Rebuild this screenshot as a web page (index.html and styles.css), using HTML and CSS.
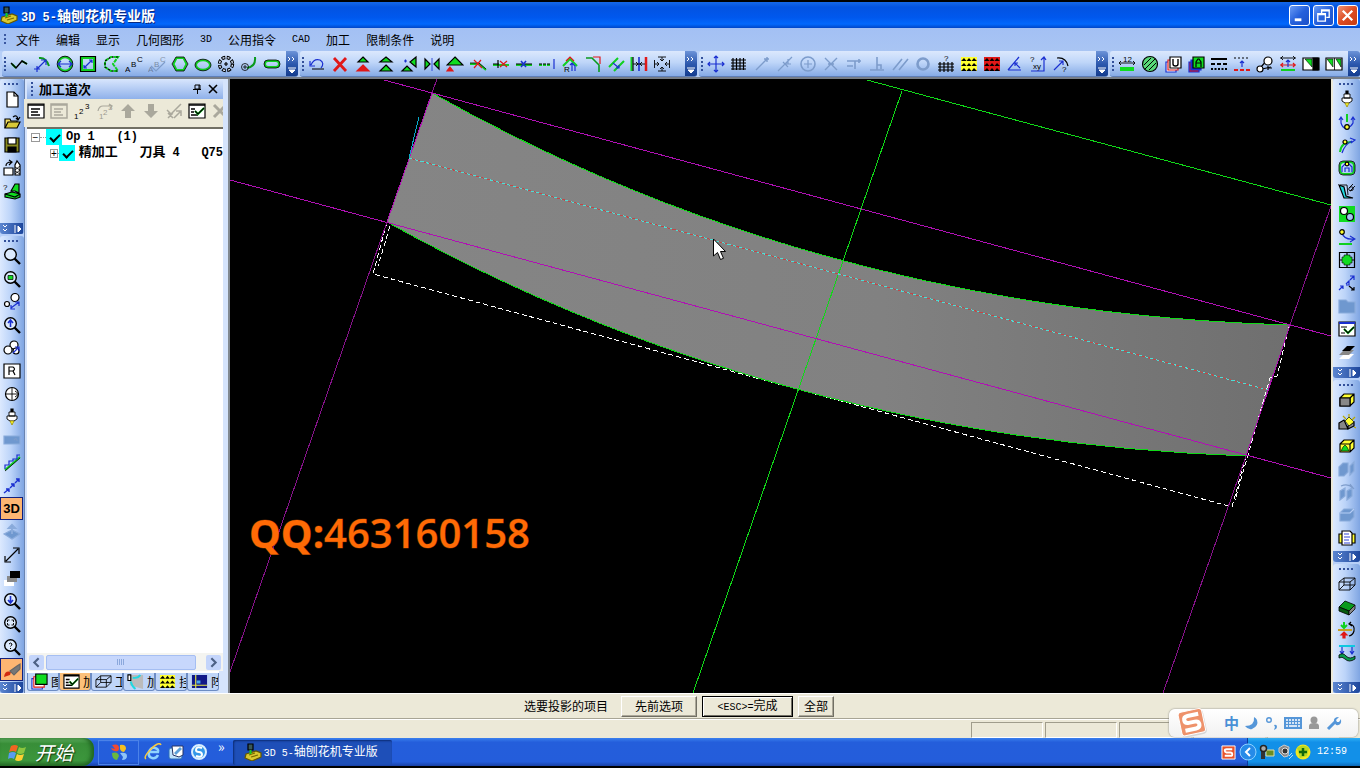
FILE: index.html
```html
<!DOCTYPE html>
<html lang="zh-CN">

<head>
    <meta charset="UTF-8" />
    <meta name="viewport" content="width=device-width, initial-scale=1.0">
    <title>3D 5-轴刨花机专业版</title>
    <link rel="stylesheet" href="styles.css">
</head>

<body>
    <header class="titlebar">
        <svg class="icon" data-icon="app"></svg>
        <h1><span>3D 5-</span>轴刨花机专业版</h1>
        <button class="win-btn" aria-label="最小化"><svg viewBox="0 0 20 20"><path d="M5 13h7v3H5z" fill="#fff" /></svg></button>
        <button class="win-btn" aria-label="还原"><svg viewBox="0 0 20 20"><path d="M8 8V4h8v8h-3M4 8h8v8H4zM8 5h8M4 9h8" fill="none" stroke="#fff" stroke-width="1.4" /></svg></button>
        <button class="win-btn close" aria-label="关闭"><svg viewBox="0 0 20 20"><path d="M5 5l10 10M15 5L5 15" stroke="#fff" stroke-width="2.4" /></svg></button>
    </header>

    <nav class="menubar">
        <button>文件</button>
        <button>编辑</button>
        <button>显示</button>
        <button>几何图形</button>
        <button class="latin">3D</button>
        <button>公用指令</button>
        <button class="latin">CAD</button>
        <button>加工</button>
        <button>限制条件</button>
        <button>说明</button>
    </nav>

    <div class="toolbars">
        <div class="toolbar w1" data-tools="check arcline diameter diagonal crescent abc abcOff hexagon ellipse dots hook slot"></div>
        <div class="toolbar w2" data-tools="undo delete mirrorRed mirrorUp mirrorDiag mirrorSide mirrorBig trimEnd trimMid join extend roof corner offset gap compress"></div>
        <div class="toolbar w3" data-tools="move grid lineOff tangentOff centerOff crossOff tarrowOff perpOff parallelOff circleOff gridQuery hatchYellow hatchRed angle queryXY queryArc"></div>
        <div class="toolbar w4" data-tools="dimension hatchCircle layersU layersA lineStyle dashStyle nodes measure triDark triLight"></div>
    </div>

    <main class="workspace">
        <div class="side left">
            <div class="vbar" data-tools="file open save export help3d"></div>
            <div class="vbar grow" data-tools="zoom zoomGreen nodesArrow zoomUp circles boxR axis plug rectOff stairs steps view3d pinOff expand layers zoomDown zoomWindow zoomHelp brush"></div>
        </div>

        <aside class="panel">
            <div class="panel-head">
                <h2>加工道次</h2>
                <button aria-label="固定"><svg viewBox="0 0 12 12"><path d="M4 2h5v4H4zM2 6.5h8M6.5 7v4M8 2v4" fill="none" stroke="#000" /></svg></button>
                <button aria-label="关闭"><svg viewBox="0 0 12 12"><path d="M2 2l8 8M10 2l-8 8" stroke="#000" stroke-width="1.6" /></svg></button>
            </div>
            <div class="panel-tools" data-tools="list listOff numbers numbersOff upOff downOff checksOff listCheck removeOff"></div>
            <ul class="tree">
                <li><span class="expander">−</span><span class="dotline"></span><label><input type="checkbox" checked>Op 1 &nbsp; (1)</label></li>
                <li class="child"><span class="expander">+</span><span class="dotline"></span><label><input type="checkbox" checked><span class="cjk">精加工</span> &nbsp; <span class="cjk">刀具</span> 4 &nbsp; Q75</label></li>
            </ul>
            <div class="scrollbar">
                <button aria-label="向左"><svg viewBox="0 0 14 14"><path d="M9 3L5 7l4 4" /></svg></button>
                <span class="thumb"></span>
                <button aria-label="向右"><svg viewBox="0 0 14 14"><path d="M5 3l4 4-4 4" /></svg></button>
            </div>
            <div class="tabs">
                <button><svg class="icon" data-icon="tabLayers"></svg><span>图层</span></button>
                <button class="active"><svg class="icon" data-icon="listCheck"></svg><span>加工</span></button>
                <button><svg class="icon" data-icon="wirebox"></svg><span>工件</span></button>
                <button><svg class="icon" data-icon="tabTool"></svg><span>加工</span></button>
                <button><svg class="icon" data-icon="hatchYellow"></svg><span>挂起</span></button>
                <button><svg class="icon" data-icon="tabNest"></svg><span>阵列</span></button>
            </div>
        </aside>

        <svg class="viewport" viewBox="230 79 1101 614" preserveAspectRatio="xMidYMid slice">
            <defs>
                <linearGradient id="surface">
                    <stop offset="0" stop-color="#858585" />
                    <stop offset=".55" stop-color="#818181" />
                    <stop offset=".75" stop-color="#797979" />
                    <stop offset="1" stop-color="#6f6f6f" />
                </linearGradient>
            </defs>
            <g class="lines">
                <path fill="url(#surface)" d="M432 93Q819 311 1290 325L1246 456Q777 439 387 222z" />
                <path class="dashed" d="M387 222L373 274L1232 507L1246 456M390 226L378 266M1289 327L1277 376L1270 378L1235 500" />
                <path class="edge" d="M867 80L1331 205M902 91L693 693M432 93Q819 311 1290 325M387 222Q777 439 1246 456" />
                <path class="frame" d="M384 80L1331 336M230 180L1331 478M432 93L387 222M1290 325L1246 456" />
                <path class="frame dim" d="M437 79L432 93M387 222L230 672M1331 206L1290 325M1246 456L1163 693" />
                <path class="path-red" d="M409 158L1268 390" />
                <path class="path-cyan" d="M409 158L1268 390" />
                <path d="M419 117L409 158" stroke="#08a8c8" />
            </g>
            <text class="mark" x="249" y="548"><tspan>QQ:</tspan>463160158</text>
            <path d="M713.500 239v17l4-3.500 3 7 3-1.200-3-6.800h5z" fill="#fff" stroke="#000" />
        </svg>

        <div class="side right">
            <div class="vbar long" data-tools="plug uArrow curveTool pocket sheet greenNodes curveLine target axes folderOff checklist sheets"></div>
            <div class="vbar mid" data-tools="box sun greenBox boxesOff foldOff cubeOff doc"></div>
            <div class="vbar grow" data-tools="wirebox brick flipAxis surface"></div>
        </div>
    </main>

    <div class="prompt">
        <span>选要投影的项目</span>
        <button class="w-prev">先前选项</button>
        <button class="w-esc default"><span class="latin">&lt;ESC&gt;=</span>完成</button>
        <button class="w-all">全部</button>
    </div>

    <div class="status">
        <span></span><span></span><span></span><span></span><span></span>
        <div class="ime">
            <svg class="ime-logo" viewBox="0 0 30 30"><g transform="rotate(-12 15 15)"><rect x="2" y="3" width="25" height="25" rx="4" fill="#d5d5d5" /><rect x="2" y="2" width="24" height="24" rx="3" fill="#ee926b" stroke="#fff" /><path d="M22 7H11q-4 0-4 3.500T11 14h6q4 0 4 3.500T17 21H6" fill="none" stroke="#fff" stroke-width="4" /></g></svg>
            <b>中</b>
            <svg viewBox="0 0 16 16"><path d="M10 2q1 9-9 9 3 4 7 3 7-3 5-9-1-2-3-3z" fill="#5596d8" /></svg>
            <svg viewBox="0 0 16 16"><circle cx="5" cy="5" r="2.300" fill="none" stroke="#5596d8" stroke-width="1.400" /><path d="M10 10q3-1 3 2 0 2-3 3l1-3z" fill="#5596d8" /></svg>
            <svg class="wide" viewBox="0 0 18 16"><path d="M0 2h18v12H0z" fill="#5596d8" /><path d="M2 5h14M2 8h14" stroke="#fff" stroke-width="1.600" stroke-dasharray="2 1" /><path d="M2 11h2m1 0h8m1 0h2" stroke="#fff" stroke-width="1.600" /></svg>
            <svg viewBox="0 0 16 16"><circle cx="8" cy="5" r="3.500" fill="#999" /><path d="M3 14V11q0-3 5-3t5 3v3z" fill="#999" /></svg>
            <svg viewBox="0 0 16 16"><path d="M2 14L9 7" stroke="#5596d8" stroke-width="3" /><path d="M8 7q-1-5 5-5l-3 3 1 2 2 0 2-3q1 7-5 6z" fill="#5596d8" /></svg>
        </div>
    </div>

    <footer class="taskbar">
        <button class="start">
            <svg viewBox="0 0 20 20"><path d="M3 4q4-2 7 0L8 10q-3-2-7 0z" fill="#f26522" /><path d="M11 5q3 2 7 0l-2 6q-4 2-7 0z" fill="#8cc63f" /><path d="M1 11q4-2 7 0l-2 6q-3-2-6 0z" fill="#5a9cf0" /><path d="M9 12q3 2 7 0l-2 6q-4 2-7 0z" fill="#fdd032" /></svg>
            开始
        </button>
        <button class="pinned" aria-label="小工具"><svg viewBox="0 0 18 18"><path d="M2 2q7-2 7 3 0 4-4 3-3 0-4-3l4 1z" fill="#f04a30" /><path d="M10 2q6-1 6 4l-2 3q-5 0-4-7z" fill="#f5c020" /><path d="M2 10q6-2 7 3l-2 4q-5 0-5-7z" fill="#6ab840" /><path d="M10 10q7-1 7 3 0 4-5 4l1-3z" fill="#8fc4f8" /></svg></button>
        <div class="quick">
            <a href="#" aria-label="Internet Explorer"><svg viewBox="0 0 18 18"><path d="M14 12q-2 4-6 3-4-1-3-6 2-5 6-4 4 1 3 4H5" fill="none" stroke="#8fd4ff" stroke-width="2.500" /><path d="M2 16Q-1 14 7 6t10-4" fill="none" stroke="#f5c842" stroke-width="1.500" /></svg></a>
            <a href="#" aria-label="桌面"><svg viewBox="0 0 18 18"><rect x="2" y="5" width="13" height="11" rx="2" fill="#bfe2fa" stroke="#2b6fb8" /><path d="M5 3h11v9l-4 2-6-2z" fill="#fff" stroke="#236" /><path d="M7 10l6-6 2 2-6 6z" fill="#5ca0d8" /></svg></a>
            <a href="#" aria-label="搜狗浏览器"><svg viewBox="0 0 18 18"><circle cx="9" cy="9" r="7" fill="#3598e8" stroke="#d9efff" stroke-width="2" /><path d="M12 5Q6 3 6 7q0 2 3 2t3 3q-1 3-6 1" fill="none" stroke="#fff" stroke-width="2" /></svg></a>
        </div>
        <span class="more">»</span>
        <button class="task"><svg class="icon" data-icon="app"></svg><span><span class="latin">3D 5-</span>轴刨花机专业版</span></button>
        <svg class="sogou" viewBox="0 0 16 16"><path d="M1 1h14v14H1z" fill="#e8532b" stroke="#fff" /><path d="M12 4.500H6Q4 4.500 4 6t2 2h4q2 0 2 2t-2 1.500H4" fill="none" stroke="#fff" stroke-width="2" /></svg>
        <div class="tray">
            <button class="collapse" aria-label="隐藏图标"><svg viewBox="0 0 18 18"><circle cx="9" cy="9" r="8" fill="#268be8" stroke="#8ed2ff" /><path d="M11 5L7 9l4 4" fill="none" stroke="#fff" stroke-width="2" /></svg></button>
            <svg viewBox="0 0 16 16"><path d="M7 6h8v6H7z" fill="#6b8e23" stroke="#dda" /><path d="M4 6v9" stroke="#333" stroke-width="4" /><circle cx="4.500" cy="4.500" r="3" fill="#aaa" stroke="#222" stroke-width="1.500" /></svg>
            <svg viewBox="0 0 16 16"><path d="M2 4l5-3 5 2-1 9-4 1-5-5z" fill="#888" stroke="#ccc" /><circle cx="8" cy="7" r="3" fill="#333" stroke="#ddd" /><path d="M12 12l3-3M12 15l4-4" stroke="#adf" /></svg>
            <svg viewBox="0 0 16 16"><circle cx="8" cy="8" r="7.500" fill="#f4e820" /><path d="M2 4q6-5 12 0l-2 8-7 2z" fill="#7bc828" opacity=".5" /><path d="M8 4v8M4 8h8" stroke="#12670c" stroke-width="2.500" /></svg>
            <time class="latin">12:59</time>
        </div>
    </footer>

    <script src="icons.js"></script>
</body>

</html>
```
FILE: styles.css
```css
* {
    box-sizing: border-box;
}

body {
    display: flex;
    flex-direction: column;
    height: 100vh;
    margin: 0;
    overflow: hidden;
    border-top: 2px solid #000;
    background: #ece9d8;
    color: #000;
    font: 12px/16px "Noto Sans CJK SC", sans-serif;
}

button {
    margin: 0;
    padding: 0;
    border: 0;
    background: none;
    color: inherit;
    font: inherit;
}

h1, h2, ul {
    margin: 0;
    padding: 0;
    font-size: 12px;
}

svg {
    flex: none;
}

.latin {
    font-family: "Liberation Mono", monospace;
    font-size: 10px;
}

/* icon strokes and fills */
.icon {
    width: 18px;
    height: 18px;
    fill: none;
    stroke: #000;
    stroke-width: 1.2;
}

.icon text {
    font: 8px "Liberation Sans", sans-serif;
    fill: #000;
    stroke: none;
}

.icon .g { stroke: #0a9a1c; }
.icon .lg { stroke: #10d020; stroke-width: 2; }
.icon .b { stroke: #1a2fd0; }
.icon .r { stroke: #e01818; }
.icon .o { stroke: #7d9ccb; }
.icon .s { stroke: #aaa89c; }
.icon .fg { fill: #10dc20; }
.icon .fr { fill: #e01818; }
.icon .fb { fill: #1a2fd0; }
.icon .fk { fill: #000; }
.icon .fw { fill: #fff; }
.icon .fy { fill: #ffff30; }
.icon .fh { fill: #888; }
.icon .fo { fill: #6f98cf; stroke: #8aabdb; }
.icon .fs { fill: #aaa89c; stroke: none; }
.icon .fc { fill: #20d8e0; }
.icon .lens { fill: #dceafd; stroke-width: 1.4; }

.titlebar {
    display: flex;
    flex: none;
    align-items: center;
    gap: 2px;
    height: 26px;
    padding-right: 2px;
    background: linear-gradient(#1568e8, #0353e1 20%, #0058ee 60%, #0268fc 85%, #0046c8);
    color: #fff;
}

.titlebar h1 {
    flex: 1;
    margin-left: 1px;
    font-size: 14px;
    line-height: 20px;
    text-shadow: 1px 1px #0a2a80;
}

.titlebar h1 span {
    font: bold 12px "Liberation Mono", monospace;
}

.win-btn {
    width: 21px;
    height: 21px;
    margin-left: 1px;
    border: 1px solid #fff;
    border-radius: 3px;
    background: linear-gradient(135deg, #6b9cf5, #2560dc 50%, #1c50c8);
}

.win-btn svg {
    display: block;
    width: 19px;
    height: 19px;
}

.win-btn.close {
    background: linear-gradient(135deg, #ee9577, #dd4b22 50%, #c43c14);
}

.menubar {
    display: flex;
    flex: none;
    align-items: center;
    gap: 16px;
    height: 23px;
    padding-left: 4px;
    background: linear-gradient(#a3c0f4, #a9c5f3);
}

.menubar::before {
    width: 2px;
    height: 12px;
    margin-right: -6px;
    background: repeating-linear-gradient(#3a57a0 0 2px, transparent 2px 4px);
    content: "";
}

.menubar .latin {
    font-size: 10px;
}

.toolbars {
    display: flex;
    flex: none;
    gap: 2px;
    height: 26px;
    padding-left: 2px;
    background: #b6cff8;
}

.toolbar {
    display: flex;
    align-items: center;
    border-bottom: 1px solid #5f7fb8;
    border-radius: 3px;
    background: linear-gradient(#dbe8fd, #bfd6f9 45%, #86abe6);
    overflow: hidden;
}

.toolbar::before {
    width: 2px;
    height: 14px;
    margin: 0 1px 0 2px;
    background: repeating-linear-gradient(#33509a 0 2px, transparent 2px 4px);
    content: "";
}

.w1 { flex: 296 1 0; }
.w2 { flex: 397 1 0; }
.w3 { flex: 409 1 0; }
.w4 { flex: 250 1 0; }

.tool {
    display: flex;
    flex: none;
    align-items: center;
    justify-content: center;
    width: 23px;
    height: 23px;
}

.more-tools {
    display: flex;
    flex: none;
    align-items: center;
    justify-content: center;
    width: 12px;
    height: 26px;
    margin-left: auto;
    background: linear-gradient(#6c93d8, #2c58ad 50%, #123a8c);
}

.more-tools svg {
    width: 10px;
    height: 20px;
    fill: none;
    stroke: #fff;
}

.workspace {
    display: flex;
    flex: 1;
    min-height: 0;
    border-top: 2px solid #777e88;
    background: #000;
}

.side {
    display: flex;
    flex: none;
    flex-direction: column;
    gap: 2px;
    width: 25px;
    border-right: 1px solid #6b84b0;
    background: #b8d0f8;
}

.side.right {
    width: 29px;
    border-right: 0;
    border-left: 2px solid #ece9d8;
}

.vbar {
    display: flex;
    flex: none;
    flex-direction: column;
    align-items: center;
    height: 155px;
    border-radius: 3px;
    background: linear-gradient(90deg, #dce9fe, #bcd4f9 45%, #7fa5e2);
    overflow: hidden;
}

.vbar.long { height: 299px; }
.vbar.mid { height: 182px; }
.vbar.grow { flex: 1; }

.vbar::before {
    flex: none;
    width: 15px;
    height: 2px;
    margin: 4px 0 2px;
    background: repeating-linear-gradient(90deg, #33509a 0 2px, transparent 2px 4px);
    content: "";
}

.left .vbar {
    padding-right: 1px;
}

.vbar .more-tools {
    width: 100%;
    height: 11px;
    margin: auto 0 0;
    background: linear-gradient(90deg, #5c86d0, #1d469c);
}

.vbar .more-tools svg {
    width: 24px;
    height: 10px;
}

.tool.pressed {
    border: 1px solid #14207c;
    background: #fdb672;
}

.tool .label {
    font: bold 13px "Liberation Sans", sans-serif;
}

.panel {
    display: flex;
    flex: none;
    flex-direction: column;
    width: 205px;
    padding: 0 5px 0 2px;
    border-right: 2px solid #808890;
    background: #d5e4fc;
}

.panel-head {
    display: flex;
    flex: none;
    align-items: center;
    gap: 4px;
    height: 20px;
    padding: 0 4px;
    background: linear-gradient(#d8e6fd, #8fb1ea);
}

.panel-head::before {
    width: 2px;
    height: 14px;
    margin-right: 2px;
    background: repeating-linear-gradient(#33509a 0 2px, transparent 2px 4px);
    content: "";
}

.panel-head h2 {
    flex: 1;
    font-size: 13px;
}

.panel-head svg {
    display: block;
    width: 12px;
    height: 12px;
}

.panel-tools {
    display: flex;
    flex: none;
    height: 28px;
    margin-left: -3px;
    background: #ece9d8;
    overflow: hidden;
}

.tree {
    flex: 1;
    border-top: 2px solid #716f64;
    background: #fff;
    list-style: none;
    font: bold 12px/16px "Liberation Mono", "Noto Sans CJK SC", monospace;
    overflow: hidden;
}

.tree li {
    display: flex;
    align-items: center;
    height: 16px;
    padding-left: 4px;
    white-space: nowrap;
}

.tree .child {
    padding-left: 23px;
}

.tree label {
    display: flex;
    align-items: center;
    white-space: pre;
}

.tree .cjk {
    font-size: 13px;
}

.expander {
    width: 9px;
    height: 9px;
    border: 1px solid #999;
    font: 10px/7px "Liberation Sans", sans-serif;
    text-align: center;
}

.dotline {
    width: 6px;
    border-top: 1px dotted #999;
}

.tree input {
    width: 16px;
    height: 16px;
    margin: 0 4px 0 0;
    background: #00ffff;
    appearance: none;
}

.tree input:checked::after {
    display: block;
    width: 8px;
    height: 4px;
    margin: 5px 4px;
    border-bottom: 2px solid #000;
    border-left: 2px solid #000;
    transform: rotate(-45deg);
    content: "";
}

.scrollbar {
    display: flex;
    flex: none;
    align-items: center;
    gap: 2px;
    height: 18px;
    padding: 1px 2px;
    background: #f4f4f0;
}

.scrollbar button {
    width: 15px;
    height: 15px;
    border-radius: 2px;
    background: #c4d5fb;
}

.scrollbar svg {
    display: block;
    width: 15px;
    height: 15px;
    fill: none;
    stroke: #4d6185;
    stroke-width: 2;
}

.thumb {
    flex: 1;
    height: 15px;
    margin-right: 8px;
    border: 1px solid #a5bef2;
    border-radius: 2px;
    background: repeating-linear-gradient(90deg, #8ba8dc 0 1px, transparent 1px 2px) center / 8px 6px no-repeat, #c7d7fc;
}

.tabs {
    display: flex;
    flex: none;
    height: 22px;
    padding-bottom: 2px;
    border-top: 2px solid #fff;
    margin-right: 4px;
}

.tabs button {
    display: flex;
    flex: 1;
    align-items: center;
    min-width: 0;
    padding-left: 3px;
    border: 1px solid #6c8cc4;
    border-top: 0;
    border-radius: 0 0 3px 3px;
    background: #bfd5f8;
    overflow: hidden;
}

.tabs .icon {
    width: 17px;
    height: 17px;
}

.tabs .active {
    background: #fcc07a;
}

.tabs span {
    width: 7px;
    height: 16px;
    margin-left: 3px;
    overflow: hidden;
    white-space: nowrap;
}

.viewport {
    flex: 1;
    min-width: 0;
    width: 0;
    height: 100%;
    background: #000;
    fill: none;
}

.lines { shape-rendering: crispEdges; }
.edge { stroke: #10d818; }
.frame { stroke: #b010b4; }
.frame.dim { stroke: #86128a; }

.dashed {
    stroke: #fff;
    stroke-dasharray: 5 3;
}

.path-red {
    stroke: #c04848;
}

.path-cyan {
    stroke: #50dcd4;
    stroke-dasharray: 3 3;
}

.mark {
    fill: #ff6a05;
    font: 600 40px "Open Sans", sans-serif;
    paint-order: stroke;
    stroke: #5a2400;
    stroke-width: 1px;
}

.mark tspan {
    font-weight: 700;
}

.prompt {
    display: flex;
    flex: none;
    align-items: center;
    justify-content: center;
    height: 26px;
    border-top: 1px solid #fff;
    border-bottom: 1px solid #a8a595;
}

.prompt button {
    height: 21px;
    border: 1px solid;
    border-color: #fff #716f64 #716f64 #fff;
    box-shadow: inset -1px -1px #aca899;
}

.prompt .w-prev { width: 76px; margin: 0 5px 0 13px; }
.prompt .w-esc { width: 91px; margin-right: 5px; }
.prompt .w-all { width: 36px; margin-right: 2px; }

.prompt .default {
    border: 1px solid #000;
    box-shadow: inset 1px 1px #fff, inset -1px -1px #716f64;
}

.status {
    position: relative;
    display: flex;
    flex: none;
    justify-content: flex-end;
    gap: 2px;
    height: 19px;
    padding: 2px 21px 0 0;
    border-top: 1px solid #fff;
}

.status > span {
    width: 72px;
    border: 1px solid;
    border-color: #a09d8c #fff #fff #a09d8c;
}

/* input method bar floats over the status line */
.ime {
    position: absolute;
    right: 2px;
    bottom: 1px;
    display: flex;
    align-items: center;
    gap: 4px;
    width: 189px;
    height: 28px;
    padding-left: 9px;
    border-radius: 6px;
    background: linear-gradient(#fff, #f1f1f1);
    box-shadow: 0 0 2px #777;
}

.ime svg {
    width: 16px;
    height: 16px;
}

.ime .wide {
    width: 18px;
}

.ime .ime-logo {
    width: 30px;
    height: 30px;
    margin-right: 12px;
}

.ime b {
    width: 16px;
    color: #4a90d6;
    font-size: 15px;
}

.taskbar {
    display: flex;
    flex: none;
    align-items: center;
    height: 30px;
    border-bottom: 2px solid #000;
    background: linear-gradient(#3a80ee, #245edb 15%, #245ddb 85%, #1941a5);
    color: #fff;
}

.start {
    display: flex;
    align-items: center;
    gap: 7px;
    width: 94px;
    height: 28px;
    padding-left: 8px;
    border-radius: 0 10px 12px 0;
    background: linear-gradient(#64b464, #388e38 20%, #3c963c 80%, #2a6e2a);
    box-shadow: inset -3px 0 4px #1f6420;
    font-size: 19px;
    font-style: italic;
    text-shadow: 1px 1px 1px #153a10;
    white-space: nowrap;
}

.start svg {
    width: 20px;
    height: 20px;
}

.pinned {
    width: 41px;
    height: 25px;
    margin-left: 4px;
    border: 1px solid #4b82e8;
}

.pinned svg,
.quick svg,
.collapse svg {
    display: block;
    width: 18px;
    height: 18px;
    margin: 0 auto;
}

.quick {
    display: flex;
    gap: 5px;
    margin-left: 5px;
}

.more {
    margin: -12px 0 0 10px;
    font-size: 14px;
}

.task {
    display: flex;
    align-items: center;
    gap: 2px;
    width: 159px;
    height: 25px;
    margin-left: 8px;
    padding-left: 11px;
    border-radius: 2px;
    background: #1e4fb8;
    box-shadow: inset 1px 1px 2px #0c2c74;
    white-space: nowrap;
}

.sogou {
    width: 15px;
    height: 15px;
    margin-left: auto;
}

.tray {
    display: flex;
    align-items: center;
    gap: 2px;
    width: 113px;
    height: 28px;
    margin-left: 11px;
    border-left: 1px solid #0c3a9c;
    background: linear-gradient(#2fb0f6, #1290e8 15%, #1290e8 85%, #0c68b8);
}

.tray svg {
    width: 16px;
    height: 16px;
}

.tray .collapse {
    margin-left: -9px;
}

.tray .collapse svg {
    width: 18px;
    height: 18px;
}

.tray time {
    margin-left: 4px;
}
```
FILE: icons.js
```js
var lens = '<path d="M11 11l6 6" stroke-width="2.4"/><circle cx="7.5" cy="7.5" r="5.8" class="lens"/>';
var zig = '<path d="M1 6l3-3 2.500 3L9 3l2.500 3L14 3l3 3zM1 11l3-3 2.500 3L9 8l2.500 3L14 8l3 3zM1 16l3-3 2.500 3L9 13l2.500 3 2.500-3 3 3z" class="fk" stroke="none"/>';
var cube = 'M2 7l4-4h10v8l-4 4H2zM2 7h10v8M12 7l4-4';
var gridLines = 'M3 3v12M6.500 3v12M10 3v12M13.500 3v12M1 5h15M1 8h15M1 11h15M1 14h15';

var icons = {
    app: '<path d="M2 11l10-3 5 2v4l-9 4-7-3z" fill="#d8c830" stroke="#655800"/><path d="M5 12l6-2M7 14l7-2" stroke="#776a00"/><path d="M4 1h5v6H4z" fill="#385858"/><path d="M6.500 7v4" class="lg"/>',

    // geometry
    check: '<path class="lg" d="M12 6l5 3M6 13l-4-4"/><path d="M1 8l5 5 6-7 5 3" stroke-width="1.500"/>',
    arcline: '<path class="g" d="M6 3q7-1 10 8" stroke-width="2"/><path class="b" d="M4 14l9-9M8 5h5v5M1 14h6M4 11v6"/>',
    diameter: '<circle class="lg" cx="9" cy="9" r="6.800"/><circle cx="9" cy="9" r="7.800" stroke-width=".9"/><path class="b" d="M2 9h14M5 6L2 9l3 3M13 6l3 3-3 3"/>',
    diagonal: '<path class="lg" d="M3 3h12v12H3z"/><path d="M1.500 1.500h15v15h-15z"/><path class="b" d="M5 13l8-8M10 5h3v3M5 10v3h3"/>',
    crescent: '<path class="lg" d="M16 2H9L3 6v6l6 4h7L11 9z" stroke-dasharray="4 1"/><path d="M16 2H9L3 6v6l6 4h7" stroke-dasharray="2 2"/>',
    abc: '<text x="0" y="17">A</text><text x="6" y="12">B</text><text x="12" y="7">C</text>',
    abcOff: '<g opacity=".35"><text x="0" y="17">A</text><text x="6" y="12">B</text><text x="12" y="7">C</text></g><path class="o" d="M3 11l5 5 9-9"/>',
    hexagon: '<path class="lg" d="M5.500 3h7l3 6-3 6h-7l-3-6z"/><path d="M5 2h8l4 7-4 7H5L1 9z" stroke-width=".8"/>',
    ellipse: '<ellipse class="lg" cx="9" cy="10" rx="7" ry="4.800"/><ellipse cx="9" cy="10" rx="8" ry="5.800" stroke-width=".8"/>',
    dots: '<circle cx="9" cy="9" r="6.500" stroke-width="3.400" stroke-dasharray="3.600 1.500"/><circle cx="9" cy="9" r="6.500" stroke="#dbe8fd" stroke-width="1.400" stroke-dasharray="2 3.100" stroke-dashoffset="-.8"/><path d="M9 7v4M7 9h4"/>',
    hook: '<path class="g" d="M15 2q1 10-8 11" stroke-width="2"/><circle cx="5" cy="12" r="3.500" stroke-width=".8"/><path d="M3 12h4M5 10v4" stroke-width=".8"/>',
    slot: '<rect class="lg" x="2" y="6" width="14" height="6" rx="3"/><rect x="1" y="5" width="16" height="8" rx="4" stroke-width=".8"/>',

    // editing
    undo: '<path class="b" d="M2 6v5h5M3 10Q6 3 12 5q5 3 1 8"/><path d="M4 14h12"/>',
    delete: '<path class="r" d="M3 3l12 13M15 3L3 16" stroke-width="2.800"/>',
    mirrorRed: '<path class="fg" d="M9 2l5 5H4z"/><path class="fr r" d="M9 10l6 6H3z"/>',
    mirrorUp: '<path class="fg" d="M9 2l6 5H3zM9 10l6 6H3z"/>',
    mirrorDiag: '<path class="fg" d="M10 7l6-5v10zM2 16l5-5 5 5z"/><path class="b" d="M4 6h3M5.500 4.500v3"/>',
    mirrorSide: '<path class="fg" d="M2 4l5 5-5 5zM16 4l-5 5 5 5z"/><path class="b" d="M9 3v13" stroke-width=".8"/>',
    mirrorBig: '<path class="fg" d="M9 2l8 8H1z"/><path class="fr r" d="M4 12l3 4H1z"/>',
    trimEnd: '<path class="lg" d="M1 9h9l7 6"/><path d="M1 8h9l7 6" stroke-width=".8"/><path class="r" d="M5 5l8 8M12 5l-7 8"/>',
    trimMid: '<path class="lg" d="M1 10h16"/><path d="M1 9h6M6 5v8"/><path class="r" d="M8 6l7 6M15 6l-7 6"/>',
    join: '<path class="lg" d="M1 10h16"/><path d="M1 9h16"/><path class="b" d="M6 6l5 6M11 6l-5 6" stroke-width="1.500"/>',
    extend: '<path class="lg" d="M1 10h12" stroke-dasharray="3 1"/><path d="M1 9h12" stroke-dasharray="3 1"/><path class="b" d="M16 4v10"/>',
    roof: '<path class="lg" d="M2 11l7-7 7 7"/><path class="r" d="M5 6l4-4 4 4"/><text x="3" y="17">R</text><path class="b" d="M11 16V8M9 10l2-2 3 3v5"/>',
    corner: '<path class="r" d="M9 2h7v7"/><path class="g" d="M2 3h6l7 7v7" stroke-width="1.600"/>',
    offset: '<path class="lg" d="M2 12L11 3M7 16l10-10"/><path class="b" d="M6 8l6 5M9 13h3v-3"/>',
    gap: '<path class="lg" d="M1.500 2v14"/><path d="M3 2v14"/><path class="r" d="M16 2v14" stroke-width="2.500"/><path class="b" d="M9 2v14" stroke-width="1.600"/><path d="M3 9h12M6 7l2 2-2 2M12 7l-2 2 2 2" stroke-width=".9"/>',
    compress: '<path d="M5 2h8M5 16h8M1.500 5v8M16.500 5v8M9 2v4M7 4l2 2 2-2M9 16v-4M7 14l2-2 2 2M2 9h4M12 9h4M4 7l2 2-2 2M14 7l-2 2 2 2" stroke-width=".9"/>',

    // snapping and queries
    move: '<path class="b" d="M9 1v16M1 9h16M7 3l2-2 2 2M7 15l2 2 2-2M3 7L1 9l2 2M15 7l2 2-2 2"/>',
    grid: '<path d="' + gridLines + '"/>',
    lineOff: '<path class="o" d="M3 15L15 3M11 4h5M14 2v5" stroke-width="1.400"/>',
    tangentOff: '<path class="o" d="M2 16L16 2M7 7l5 5M12 4v5M9 9h6"/>',
    centerOff: '<circle class="o" cx="9" cy="9" r="7" stroke-width="1.600"/><path class="o" d="M9 5v8M5 9h8"/>',
    crossOff: '<path class="o" d="M3 3l12 12M15 3L3 15M6 9h6" stroke-width="1.400"/>',
    tarrowOff: '<path class="o" d="M2 6h14M10 6v8M2 11h6M14 4v4" stroke-width="1.600"/>',
    perpOff: '<path class="o" d="M9 2v13M2 15h14M9 10h4v4" stroke-width="1.600"/>',
    parallelOff: '<path class="o" d="M2 15L11 4M8 15l9-11" stroke-width="1.600"/>',
    circleOff: '<circle class="o" cx="9" cy="9" r="5.500" stroke-width="2.600"/>',
    gridQuery: '<path d="M3 7v10M7 7v10M11 7v10M15 7v10M1 9h16M1 12h16M1 15h16"/><text x="7" y="6">?</text>',
    hatchYellow: '<path d="M1 2h16v14H1z" class="fy" stroke="none"/>' + zig,
    hatchRed: '<path d="M1 2h16v14H1z" class="fr" stroke="none"/>' + zig,
    angle: '<path class="b" d="M2 15L13 2M2 15h13M9 8l5 5M9 11V8h3"/>',
    queryXY: '<text x="1" y="7">?</text><text x="4" y="14">xy</text><path class="b" d="M2 16h13V3M12 5l3-3 2 3"/>',
    queryArc: '<path d="M5 3q9-1 11 8"/><path class="b" d="M2 15l9-9M7 6h4v4"/><text x="10" y="17">?</text>',

    // layers and display
    dimension: '<text x="5" y="7">12</text><path d="M1 8h16M3 6L1 8l2 2M15 6l2 2-2 2" stroke-width=".9"/><path class="fg" d="M2 12h14v4H2z" stroke="none"/>',
    hatchCircle: '<circle cx="9" cy="9" r="7.500" fill="#58d878"/><path d="M3 10l7-7M4 14L14 4M8 15l7-7" stroke-width="1"/>',
    layersU: '<path class="b fw" d="M2 7h10v10H2z"/><path class="r fw" d="M4 5h10v10H4z"/><path class="fw" d="M6 2h11v11H6z"/><path d="M9 4v5q0 2 2.500 2T14 9V4" stroke-width="1.400"/>',
    layersA: '<path class="b fr" d="M2 7h10v10H2z"/><path class="b fb" d="M4 5h10v10H4z"/><path class="fg" d="M6 2h11v11H6z"/><path d="M9 12V7l2-3h1l2 3v5M9 8h5"/>',
    lineStyle: '<path d="M1 4h16" stroke-width="2"/><path d="M1 9h16" stroke-width="2" stroke-dasharray="4 2"/><path d="M1 14h16" stroke-width="2" stroke-dasharray="2 1.500"/>',
    dashStyle: '<path d="M1 3h16" stroke-dasharray="2 2"/><path class="r" d="M1 15h16" stroke-width="2" stroke-dasharray="4 2"/><path class="b" d="M9 12V6M7 8l2-2 2 2"/>',
    nodes: '<path d="M5 12l7-8M6 14l9-2"/><circle class="fw" cx="12" cy="6" r="4"/><circle class="fw" cx="4" cy="14" r="3"/><path d="M12 11v4M12 13h4"/>',
    measure: '<path class="r" d="M1 10h16M4 8l-2 2 2 2M14 8l2 2-2 2"/><path d="M1 3h16M4 1L2 3l2 2M14 1l2 2-2 2" stroke-width=".9"/><path class="b" d="M9 12V5M7 7l2-2 2 2"/><path class="lg" d="M2 15h14"/>',
    triDark: '<path class="fw" d="M1 3h15v12H1z"/><path class="fk" d="M11 3h6v12h-6z"/><path class="fg" d="M3 4h7v8z" stroke-width=".6"/>',
    triLight: '<path class="fw" d="M1 3h16v12H1z"/><path class="fg" d="M2 4h6v8zM11 4h5v8z" stroke-width=".6"/><path d="M9.500 3v12" stroke-width=".8"/>',

    // files
    file: '<path class="fw" d="M4 2h7l4 4v11H4z"/><path d="M11 2v4h4"/>',
    open: '<path d="M2 15V6h5l1 2h6v3" fill="#f2df60"/><path d="M2 15l3-6h12l-3 6z" fill="#d8c838"/><path d="M10 4q4-3 5 2M13 5l2 2 2-3"/>',
    save: '<path d="M2 2h14v14H2z" fill="#8a8a20"/><path class="fw" d="M5 2h8v6H5z"/><path class="fk" d="M5 11h8v5H5z"/>',
    export: '<path class="fw" d="M1 9h9v7H1z"/><path d="M3 7q0-4 5-4M6 1l3 2-3 3"/><path class="fw" d="M12 16V6l2-4 3 4v10z"/><path d="M12 8l5 3M12 12l5 3M17 7l-5 4M17 11l-5 4" stroke-width=".8"/>',
    help3d: '<text x="0" y="8" font-weight="bold">?</text><path class="fg" d="M2 12l7-2 8 2v3l-5 2-10-2zM8 9l4-7h4v9l-4-2z"/><path d="M2 12l10 3 5-3"/>',

    // view
    zoom: lens,
    zoomGreen: lens + '<path class="fg" d="M5 5.500h5v4H5z" stroke-width=".7"/>',
    nodesArrow: '<circle class="fw" cx="12" cy="4.500" r="4"/><circle class="fw" cx="4" cy="11" r="2.500"/><path class="b" d="M8 15l8-6M8 12v4h4M12 9h4v4"/>',
    zoomUp: lens + '<path class="b" d="M7.500 11V4M5 7l2.500-3L10 7" stroke-width="1.600"/>',
    circles: '<circle class="fw" cx="11" cy="6" r="4"/><circle class="fw" cx="5" cy="11" r="4"/><circle class="fw" cx="13" cy="12" r="3"/><path class="b" d="M10 14l6-6M12 8h4v4"/>',
    boxR: '<path class="fw" d="M1 2h16v14H1z"/><path d="M6 13V5h4q3 2 0 4H6m4 0l2 4"/>',
    axis: '<circle class="fw" cx="9" cy="9" r="6.500"/><path d="M2 9h14M9 3v12M12 6l4 3-4 3" stroke-width=".9"/>',
    plug: '<path class="fk" d="M8 1h2v4H8z"/><path class="fw" d="M6 4h6v4H6zM4 8h10v3l-3 2H7l-3-2z" stroke-width=".9"/><path class="fy" d="M7 13h4l-2 4z" stroke="#988800" stroke-width=".8"/>',
    rectOff: '<path class="fo" d="M1 5h16v8H1z"/><path class="o" d="M11 9q3-3 3 1"/>',
    stairs: '<path class="lg" d="M2 16L17 3"/><path d="M2 17L17 4" stroke-width=".8"/><path class="b" d="M2 15v-4h4V7h4V5h4V1h3"/>',
    steps: '<path class="b" d="M1 16l5-4M7 11l4-4M12 6l4-4M3 12h3v3M8 7h3v3M13 2h3v3" stroke-width="1.400"/>',
    pinOff: '<path class="fo" d="M1 11l8-4 8 4-8 5z"/><path class="fo" d="M9 11V4M6 5l3-3 3 3z" stroke-width="2"/>',
    expand: '<path d="M3 15L15 3M10 2h6v6M2 10v6h6"/>',
    layers: '<path class="fw" d="M1 11h10v6H1z" stroke="none"/><path class="fh" d="M4 7h10v6H4z" stroke="none"/><path class="fk" d="M7 2h10v7H7z" stroke="none"/>',
    zoomDown: lens + '<path class="b" d="M7.500 4v7M5 8l2.500 3L10 8" stroke-width="1.600"/>',
    zoomWindow: lens + '<path d="M4.500 7V5h2M8.500 5h2v2M4.500 8v2h2M10.500 8v2h-2" stroke-width=".9"/>',
    zoomHelp: lens + '<path d="M6 6q1.500-2 3 0 0 1-1.500 2.500M7.500 10v1" stroke-width="1"/>',
    brush: '<path d="M1 16q1-7 7-5l-1 3z" fill="#d02a10" stroke="none"/><path d="M7 10l7-5 3-2v5l-6 6z" fill="#777" stroke="#666"/>',

    // machining
    uArrow: '<path class="b" d="M3 5v5q2 6 6 5t6-5V5M1 7l2-3 2 3M13 7l2-3 2 3"/><path class="lg" d="M9 1v8"/><circle class="fy" cx="9" cy="14" r="2.300"/>',
    curveTool: '<path class="lg" d="M2 16q1-10 12-10"/><path class="b" d="M4 17q3-9 10-12M12 2l5 2-4 3"/><circle class="fy" cx="7" cy="6" r="2"/>',
    pocket: '<rect class="lg" x="2" y="3" width="14" height="12" rx="4"/><rect x="1" y="2" width="16" height="14" rx="4" stroke-width=".8"/><path class="b" d="M4 13V8l3-3h4l3 3v5M7 13V9h4v4"/><circle class="fy" cx="9" cy="5" r="1.800"/>',
    sheet: '<path class="fc" d="M1 3l5 2 2 9 7 2H6z"/><path d="M2 3h7l1 10M11 6l4-4M12 9l5-5M12 9q-3-2 0-4 4-1 3 3z" stroke-width=".9"/>',
    greenNodes: '<path class="fg" d="M1 1h16v16H1z" stroke="none"/><circle class="fw" cx="6" cy="6" r="3.500"/><circle cx="12" cy="12" r="3.500" fill="#a9c5f3"/>',
    curveLine: '<path class="b" d="M4 5q2 7 12 6M12 8l5 3-5 3"/><path class="lg" d="M1 16h13"/><circle class="fy" cx="4" cy="4" r="2.300"/>',
    target: '<path d="M1.500 1.500h15v15h-15zM9 2v14M2 9h14"/><path class="fg" d="M6 4h6v2h2v6h-2v2H6v-2H4V6h2z" stroke-width=".6"/>',
    axes: '<path class="b" d="M1 16l4-4M2 12h3v3M12 6l4-4M12 2h4v4M8 10l3-3v4H8"/><path d="M11 12l5 4M16 13v3h-3"/>',
    folderOff: '<path class="fo" d="M1 3h7l2 2h7v11H1z"/>',
    checklist: '<path class="fw" d="M1 2h16v14H1z"/><path class="b" d="M1 3h16" stroke-width="2"/><path d="M3 7h6M3 13h4"/><path class="lg" d="M6 9l4 4 6-6"/><path d="M6 9l4 4 6-6"/>',
    sheets: '<path class="fw" d="M1 16l5-5h10l-5 5z" stroke="none"/><path class="fh" d="M1 12l5-5h10l-5 5z" stroke="none"/><path class="fk" d="M4 8l5-5h8l-5 5z" stroke="none"/>',
    box: '<path class="fy" d="' + cube + '"/><path class="fh" d="M2 7h10v8H2z"/>',
    sun: '<path class="fh" d="M1 9l5-3 4 9H1zM10 15l6-3V8l-6 4z"/><path class="fy" d="M7 7l4-4 5 5-5 4z" stroke-width=".7"/><path d="M5 2l3 3M11 0v3M17 3l-3 3M16 13l2 1" stroke="#b8a800"/>',
    greenBox: '<path class="fy" d="' + cube + '"/><path class="fg" d="M3 14l2-4 2-2 2 2 2 4z" stroke-width=".6"/>',
    boxesOff: '<path class="fo" d="M1 7l4-4h5v9l-4 4H1zM12 6l4-4v9l-4 4z"/>',
    foldOff: '<path class="fo" d="M2 8l5-3v8l-5 4zM9 8l5-3v8l-5 4z"/><path class="o" d="M3 3q7-3 12 2M12 1l4 5"/>',
    cubeOff: '<path class="fo" d="M2 7l4-4h10v8l-4 4H2z"/><path d="M2 7h10l4-4" stroke="#b5cdf5"/>',
    doc: '<path class="fy" d="M1 5h16v9H1z"/><path class="fw" d="M4 2h8l2 2v12H4z"/><path class="b" d="M6 5h5M6 8h6M6 11h5M6 14h6" stroke-width=".9"/>',
    wirebox: '<path d="M1 7l5-4h11v7l-5 5H1zM1 7h11v8M12 7l5-4M6 3v7h11M1 15l5-5" stroke-width=".9"/>',
    brick: '<path fill="#0a9a1c" d="M1 9l6-6 10 4-6 6z" stroke-width=".8"/><path fill="#065c10" d="M1 9v4l10 4v-4z" stroke-width=".8"/><path class="fh" d="M11 13l6-6v4l-6 6z" stroke-width=".8"/>',
    flipAxis: '<path d="M0 9h14" stroke="#c8a020" stroke-width="2"/><path class="fr r" d="M6 11l3 3H7v3H5v-3H3z"/><path class="lg" d="M6 1v5M3 4l3 3 3-3"/><path d="M12 3q5 1 4 7-1 4-5 5M13 1l-2 2 3 2"/>',
    surface: '<path d="M1 2h16" stroke="#10c8e0" stroke-width="2"/><path class="b" d="M4 3v6M2 7l2 3 2-3M14 3v6M12 7l2 3 2-3"/><path fill="#0a9a4c" stroke-width=".8" d="M1 11q4-3 7 1 4 4 9 0v3q-6 4-10 0-3-3-6-1z"/>',

    // operations panel
    list: '<path class="fw" d="M1 2h16v14H1z"/><path d="M1 3h16M4 7h9M4 10h7M4 13h9" stroke-width="1.600"/>',
    listOff: '<path class="s" d="M1 2h16v14H1zM1 3h16M4 7h9M4 10h7M4 13h9" stroke-width="1.500"/>',
    numbers: '<text x="1" y="17">1</text><text x="6" y="12">2</text><text x="12" y="7">3</text>',
    numbersOff: '<g opacity=".35"><text x="3" y="17">1</text><text x="7" y="13">2</text><text x="12" y="8">3</text></g><path class="s" d="M2 9q1-5 5-5h8M13 2l3 2-2 3"/>',
    upOff: '<path class="fs" d="M9 2l7 7h-4v7H6V9H2z"/>',
    downOff: '<path class="fs" d="M9 16l7-7h-4V2H6v7H2z"/>',
    checksOff: '<path class="s" d="M2 8l4 4L16 2M3 11l5 5M8 11l-5 5M9 16l6-6M11 9h5v5" stroke-width="1.500"/>',
    listCheck: '<path class="fw" d="M1 2h16v14H1z"/><path d="M1 3h16M3 7h4M3 13h7M3 10h3" stroke-width="1.600"/><path class="lg" d="M7 9l3 3 6-6"/><path d="M7 9l3 3 6-6"/>',
    removeOff: '<path class="s" d="M3 3l12 12M15 3L3 15" stroke-width="3"/>',
    tabLayers: '<path class="b fw" d="M1 6h11v11H1z"/><path class="r fw" d="M3 4h11v11H3z"/><path class="fg" d="M5 1h12v11H5z"/>',
    tabTool: '<path d="M3 2h14v15L3 13z" fill="#bbb" stroke="none"/><path class="fw" d="M1 2h3v6H1z"/><path d="M6 5q6 1 8-3M4 9q1 5 5 8" stroke="#20d8e0" stroke-width="2"/>',
    tabNest: '<path d="M1 2h16v14H1z" fill="#101888" stroke="none"/><path d="M5 2v14M1 13h16" stroke="#e8e840"/><path d="M6 8h4v3H6z" fill="#4aa8f0" stroke="none"/>'
};

var pressed = ['view3d', 'brush'];

document.querySelectorAll('[data-icon]').forEach(function (svg) {
    svg.setAttribute('viewBox', '0 0 18 18');
    svg.innerHTML = icons[svg.dataset.icon];
});

document.querySelectorAll('[data-tools]').forEach(function (bar) {
    var html = bar.dataset.tools.split(' ').map(function (name) {
        var cls = pressed.indexOf(name) < 0 ? 'tool' : 'tool pressed';
        var face = name === 'view3d'
            ? '<span class="label">3D</span>'
            : '<svg class="icon" viewBox="0 0 18 18">' + icons[name] + '</svg>';
        return '<button class="' + cls + '" aria-label="' + name + '">' + face + '</button>';
    }).join('');

    if (bar.classList.contains('toolbar')) {
        html += '<button class="more-tools" aria-label="more"><svg viewBox="0 0 10 20"><path d="M1 3l2 2-2 2M5 3l2 2-2 2M1 14h8"/><path d="M2 16h6l-3 3z" fill="#fff"/></svg></button>';
    } else if (bar.classList.contains('vbar')) {
        html += '<button class="more-tools" aria-label="more"><svg viewBox="0 0 24 10"><path d="M3 1l2 2 2-2M3 5l2 2 2-2M15 1v8"/><path d="M18 2v6l3-3z" fill="#fff"/></svg></button>';
    }
    bar.innerHTML = html;
});
```
